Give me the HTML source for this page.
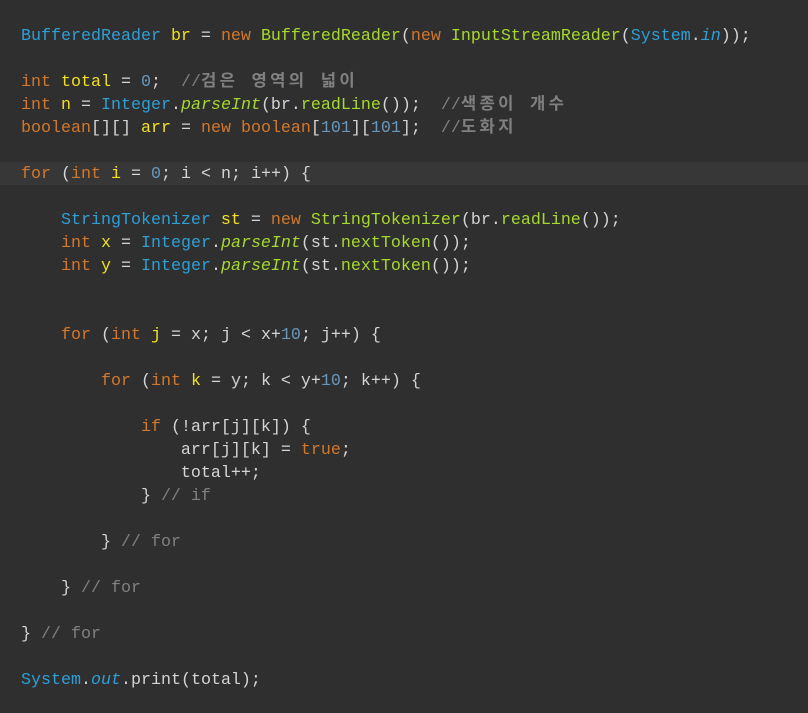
<!DOCTYPE html>
<html><head><meta charset="utf-8"><style>
html,body{margin:0;padding:0;background:#2f2f2f;width:808px;height:713px;overflow:hidden}
pre{margin:0;position:absolute;top:25px;left:21px;font-family:"Liberation Mono","Noto Sans CJK KR",monospace;font-size:16.67px;line-height:23px;color:#d4d4d4}
.hl{position:absolute;left:0;top:162px;width:808px;height:23px;background:#373737}
.k{color:#d2782c}.t{color:#2f9fd6}.m{color:#a6d82e}.i{font-style:italic}.v{color:#f0e020}.n{color:#6897bb}.c{color:#808080}
.ko{letter-spacing:3.3px;font-weight:bold}
</style></head><body>
<div class="hl"></div>
<pre><span class="t">BufferedReader</span> <span class="v">br</span> = <span class="k">new</span> <span class="m">BufferedReader</span>(<span class="k">new</span> <span class="m">InputStreamReader</span>(<span class="t">System</span>.<span class="t i">in</span>));

<span class="k">int</span> <span class="v">total</span> = <span class="n">0</span>;  <span class="c">//<span class="ko">검은 영역의 넓이</span></span>
<span class="k">int</span> <span class="v">n</span> = <span class="t">Integer</span>.<span class="m i">parseInt</span>(br.<span class="m">readLine</span>());  <span class="c">//<span class="ko">색종이 개수</span></span>
<span class="k">boolean</span>[][] <span class="v">arr</span> = <span class="k">new</span> <span class="k">boolean</span>[<span class="n">101</span>][<span class="n">101</span>];  <span class="c">//<span class="ko">도화지</span></span>

<span class="k">for</span> (<span class="k">int</span> <span class="v">i</span> = <span class="n">0</span>; i &lt; n; i++) {

    <span class="t">StringTokenizer</span> <span class="v">st</span> = <span class="k">new</span> <span class="m">StringTokenizer</span>(br.<span class="m">readLine</span>());
    <span class="k">int</span> <span class="v">x</span> = <span class="t">Integer</span>.<span class="m i">parseInt</span>(st.<span class="m">nextToken</span>());
    <span class="k">int</span> <span class="v">y</span> = <span class="t">Integer</span>.<span class="m i">parseInt</span>(st.<span class="m">nextToken</span>());


    <span class="k">for</span> (<span class="k">int</span> <span class="v">j</span> = x; j &lt; x+<span class="n">10</span>; j++) {

        <span class="k">for</span> (<span class="k">int</span> <span class="v">k</span> = y; k &lt; y+<span class="n">10</span>; k++) {

            <span class="k">if</span> (!arr[j][k]) {
                arr[j][k] = <span class="k">true</span>;
                total++;
            } <span class="c">// if</span>

        } <span class="c">// for</span>

    } <span class="c">// for</span>

} <span class="c">// for</span>

<span class="t">System</span>.<span class="t i">out</span>.print(total);</pre>
</body></html>
